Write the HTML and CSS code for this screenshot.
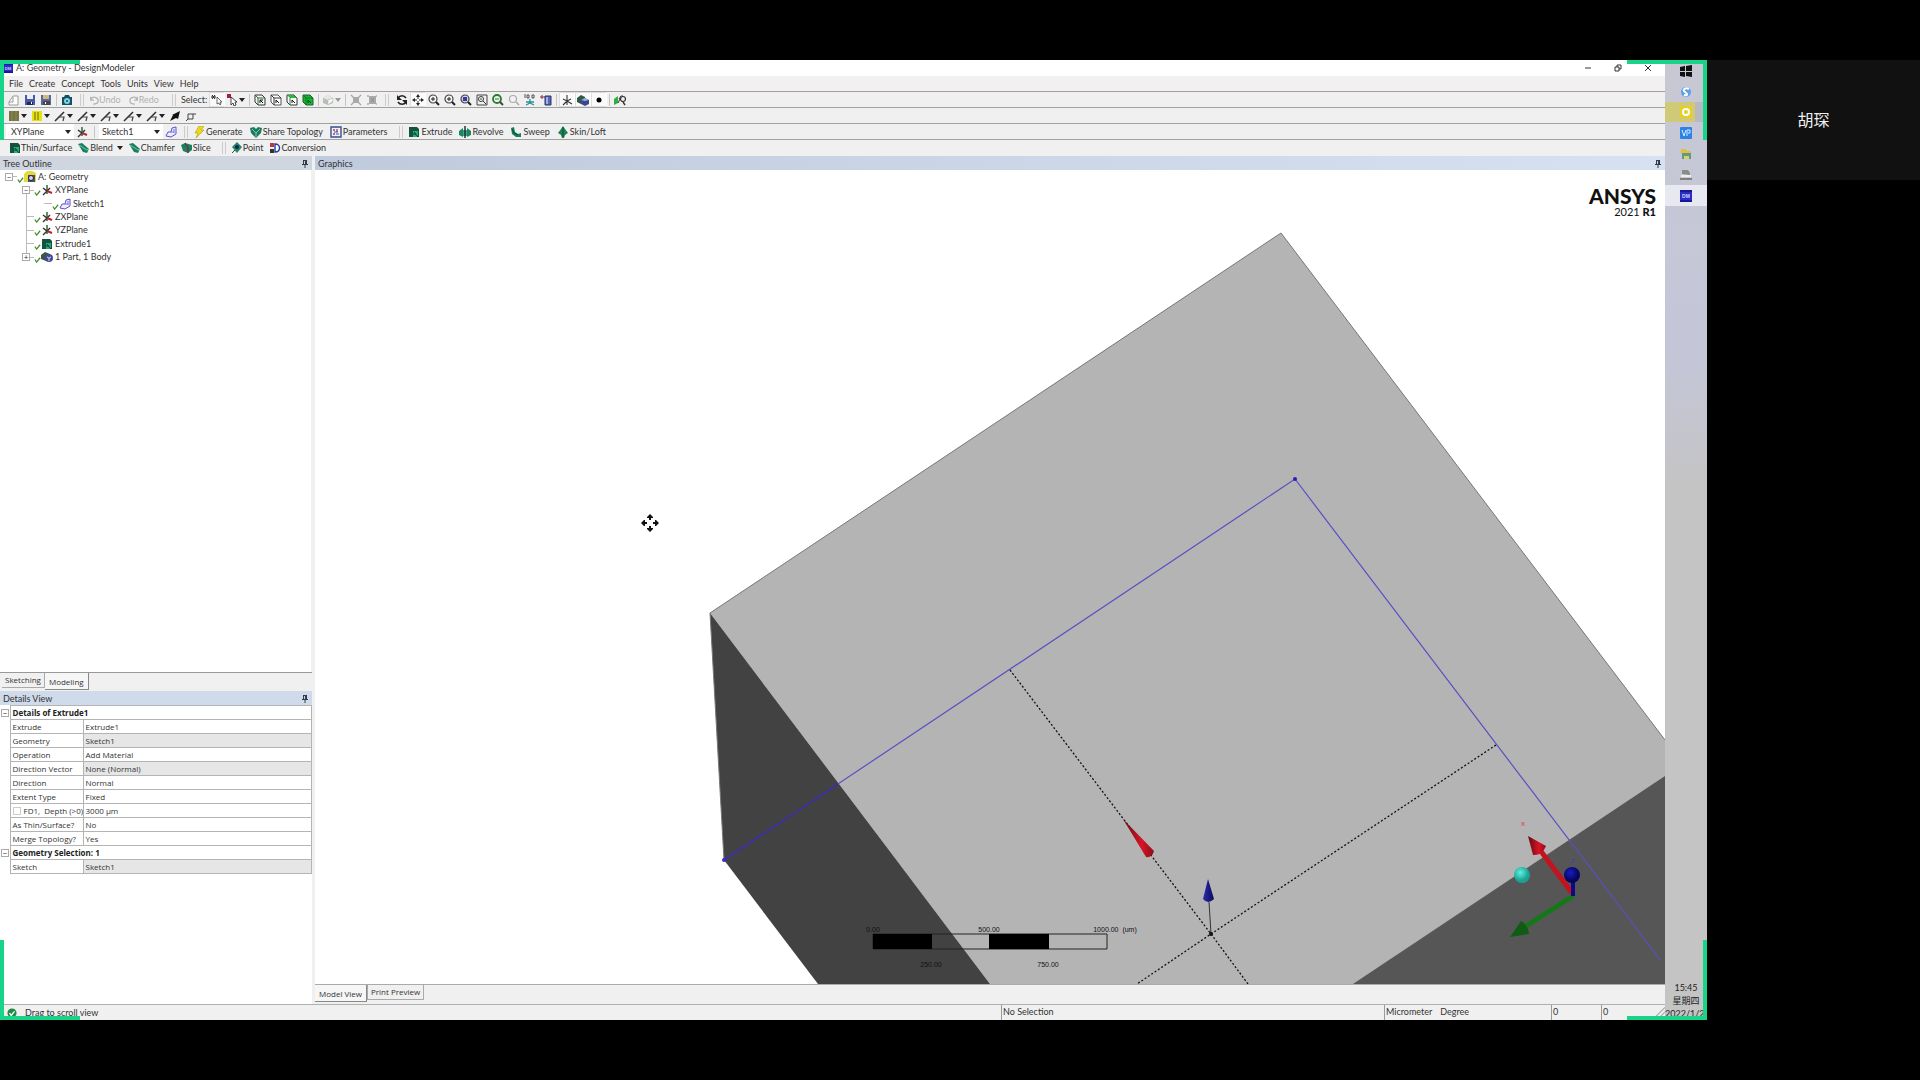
FILE: index.html
```html
<!DOCTYPE html>
<html lang="en">

<head>
    <meta charset="UTF-8">
    <meta name="viewport" content="width=device-width, initial-scale=1.0">
    <title>A: Geometry - DesignModeler</title>
    <link rel="stylesheet" href="styles.css">
</head>

<body>

    <!-- icons -->
    <svg class="defs" aria-hidden="true">
        <symbol id="new" viewBox="0 0 12 12"><path d="M1 11V8l4-6h5v9z" fill="#fff" stroke="#999"/><path d="M1 8h4V3" fill="none" stroke="#999"/></symbol>
        <symbol id="save" viewBox="0 0 12 12"><path d="M1 1h10v10H1z" fill="#4a5aa8"/><path d="M3 1h6v4H3z" fill="#e8ecf8"/><path d="M3 8h6v3H3z" fill="#222a50"/><path d="M7 8h1v2H7z" fill="#fff"/></symbol>
        <symbol id="saveas" viewBox="0 0 12 12"><path d="M1 1h10v10H1z" fill="#59669f"/><path d="M3 1h6v4H3z" fill="#d6b77a"/><path d="M3 7h7v4H3z" fill="#484848"/><path d="M5 8h1v2H5z" fill="#fff"/></symbol>
        <symbol id="camera" viewBox="0 0 12 12"><path d="M1 3h2l1-2h4l1 2h2v8H1z" fill="#17505e"/><circle cx="6" cy="7" r="3" fill="#7cd5e4"/><circle cx="6" cy="7" r="1" fill="#17505e"/></symbol>
        <symbol id="undo" viewBox="0 0 12 12"><path d="M2 2v4h4M2 6c2-5 9-4 9 1 0 3-3 4-6 4" fill="none" stroke="#b4b4b4" stroke-width="1.5"/></symbol>
        <symbol id="redo" viewBox="0 0 12 12"><path d="M10 2v4H6M10 6C8 1 1 2 1 7c0 3 3 4 6 4" fill="none" stroke="#b4b4b4" stroke-width="1.5"/></symbol>
        <symbol id="pick" viewBox="0 0 12 12"><path d="M0 3h5M1 1l3 4M4 1L1 5" stroke="#222" stroke-width="1"/><path d="M6 3v7l2-1 1 2 1-1-1-2h2z" fill="#fff" stroke="#444" stroke-width=".8"/></symbol>
        <symbol id="filter" viewBox="0 0 12 12"><path d="M1 0h4v4H1z" fill="#a32038"/><path d="M5 3v8l2-2 1 3 2-1-1-3h2z" fill="#fff" stroke="#333" stroke-width=".9"/></symbol>
        <symbol id="cube" viewBox="0 0 12 12"><path d="M1 1h7l3 3v7H4L1 8z" fill="#f4f4f4" stroke="#333"/><path d="M1 1l3 3h7M4 4v7" fill="none" stroke="#2f6b3b"/><path d="M6 6l3 3M6 6v3M6 6h3" stroke="#111"/></symbol>
        <symbol id="cubeedge" viewBox="0 0 12 12"><path d="M1 1h7l3 3v7H4L1 8z" fill="#fff" stroke="#555"/><path d="M1 1l3 3h7M4 4v7" fill="none" stroke="#333"/><path d="M6 6l3 3M6 6v3" stroke="#111"/></symbol>
        <symbol id="cubeface" viewBox="0 0 12 12"><path d="M1 1h7l3 3v7H4L1 8z" fill="#fff" stroke="#333"/><path d="M1 1h7l3 3H4z" fill="#27b53e"/><path d="M4 4v7" stroke="#27853e"/><path d="M6 6l3 3M6 6v3" stroke="#111"/></symbol>
        <symbol id="cubebody" viewBox="0 0 12 12"><path d="M1 1h7l3 3v7H4L1 8z" fill="#18b334" stroke="#14672a"/><path d="M1 1l3 3h7M4 4v7" fill="none" stroke="#0c7a20"/><path d="M6 6l3 3M6 6v3" stroke="#053a0d"/></symbol>
        <symbol id="cubegray" viewBox="0 0 12 12"><path d="M1 4l5-3 5 3v5l-5 2-5-2z" fill="#bbb"/><path d="M1 4l5 2 5-2-5-3z" fill="#e6e6e6"/><path d="M6 6l5-2v3l-5 4z" fill="#f4fff4" stroke="#a9bca9" stroke-width=".6"/></symbol>
        <symbol id="expand" viewBox="0 0 12 12"><path d="M1 1l3 3M11 1L8 4M1 11l3-3M11 11L8 8" stroke="#a5a5a5" stroke-width="1.3"/><path d="M3 3h6v6H3z" fill="#a9a9a9"/></symbol>
        <symbol id="shrink" viewBox="0 0 12 12"><path d="M3 2h7v8H3z" fill="#aaa"/><path d="M1 2h2M1 10h2M10 2h1M10 10h1M5 4l3 4M8 4L5 8" stroke="#8c8c8c"/></symbol>
        <symbol id="rotate" viewBox="0 0 12 12"><path d="M10 4C8 1 4 1 2 4M2 8c2 3 6 3 8 0" fill="none" stroke="#222" stroke-width="1.6"/><path d="M1 1v5h5zM11 11V6H6z" fill="#222"/></symbol>
        <symbol id="pan" viewBox="0 0 12 12"><path d="M6 0l2 3H4zM6 12l2-3H4zM0 6l3-2v4zM12 6L9 4v4z" fill="#222"/><path d="M6 3v2M6 7v2M3 6h2M7 6h2" stroke="#333"/></symbol>
        <symbol id="mag" viewBox="0 0 12 12"><circle cx="5" cy="5" r="4" fill="#f4f4f4" stroke="#444" stroke-width="1.2"/><path d="M8 8l3 3" stroke="#222" stroke-width="2"/><path d="M3 5h4M5 3v4" stroke="#222"/></symbol>
        <symbol id="magfill" viewBox="0 0 12 12"><circle cx="5" cy="5" r="4" fill="#cfd0f4" stroke="#444" stroke-width="1.2"/><path d="M3 3h4v4H3z" fill="#3d3a96"/><path d="M8 8l3 3" stroke="#222" stroke-width="2"/></symbol>
        <symbol id="magbox" viewBox="0 0 12 12"><path d="M1 1h10v10H1z" fill="#eee" stroke="#444"/><circle cx="5" cy="5" r="2.5" fill="#fff" stroke="#333"/><path d="M7 7l3 3M4 5h2" stroke="#333"/></symbol>
        <symbol id="maggreen" viewBox="0 0 12 12"><circle cx="5" cy="5" r="4" fill="#e6f5e6" stroke="#287a2e" stroke-width="1.8"/><path d="M8 8l3 3" stroke="#444" stroke-width="2"/><path d="M3 5h4" stroke="#287a2e"/></symbol>
        <symbol id="maggray" viewBox="0 0 12 12"><circle cx="5" cy="5" r="3.5" fill="#f2f2f2" stroke="#aaa" stroke-width="1.2"/><path d="M8 8l3 3" stroke="#aaa" stroke-width="1.6"/></symbol>
        <symbol id="iso" viewBox="0 0 12 12"><path d="M1 0v4M3 1h2v3H3zM8 1h2v3H8z" fill="none" stroke="#444" stroke-width=".9"/><path d="M6 5v4M6 9l-4 2M6 9l4 2M2 8h8" stroke="#26929b" stroke-width="1.3"/></symbol>
        <symbol id="lookat" viewBox="0 0 12 12"><path d="M5 2h6v9H5z" fill="#5666b8" stroke="#2d3567"/><path d="M0 3h5M2 1v4" stroke="#8e2846"/><path d="M6 3h2v7H6z" fill="#a5b0e2"/></symbol>
        <symbol id="axes" viewBox="0 0 12 12"><path d="M6 1v10M6 7l-4 4M6 7l5 3M2 5l4 2 4-2" stroke="#333" stroke-width="1.1" fill="none"/></symbol>
        <symbol id="plane" viewBox="0 0 12 12"><path d="M6 1v9" stroke="#2a6a3a" stroke-width="1.5"/><path d="M6 7l-4 4M2 4l4 3 3-3" stroke="#333" stroke-width="1.4" fill="none"/><path d="M6 7l5 2" stroke="#b82432" stroke-width="2"/></symbol>
        <symbol id="bodies" viewBox="0 0 12 12"><path d="M0 4l4-3 4 2v5l-4 2-4-2z" fill="#2c5a48"/><path d="M4 6l4-2 4 2v4l-4 2-4-2z" fill="#3a468e"/><path d="M4 6l4 1 4-1-4-2z" fill="#a2add8"/></symbol>
        <symbol id="dot" viewBox="0 0 12 12"><circle cx="6" cy="6" r="2.5" fill="#000"/></symbol>
        <symbol id="display" viewBox="0 0 12 12"><path d="M0 5l4-3v7l-4 2z" fill="#2fae45"/><path d="M5 5l2-3h2M4 9l2-4" fill="none" stroke="#333"/><circle cx="9" cy="5" r="2.5" fill="#eee" stroke="#333" stroke-width="1.2"/><path d="M9 8l2 3" stroke="#333" stroke-width="1.4"/></symbol>
        <symbol id="olive" viewBox="0 0 12 12"><path d="M1 1h10v10H1z" fill="#777440"/><path d="M4 1v10M8 1v10" stroke="#8e8b55"/></symbol>
        <symbol id="yellow" viewBox="0 0 12 12"><path d="M1 1h10v10H1z" fill="#e8e20c"/><path d="M4 2v8M7 2v8" stroke="#8d8a10" stroke-width="1.4"/></symbol>
        <symbol id="edge" viewBox="0 0 12 12"><path d="M1 11l9-9" stroke="#333" stroke-width="1.6"/><path d="M5 7l5 0-1 4" fill="none" stroke="#444" stroke-width="1.2"/></symbol>
        <symbol id="pen" viewBox="0 0 12 12"><path d="M1 11l3-6H3l8-4-2 8-2-1z" fill="#111"/></symbol>
        <symbol id="vertex" viewBox="0 0 12 12"><path d="M3 4h5v5H3zM8 4h3M3 9l-2 2" fill="none" stroke="#444"/></symbol>
        <symbol id="sketch" viewBox="0 0 12 12"><path d="M1 10l2-4h3l1-4 4-1v7l-5 3z" fill="#eeedff" stroke="#5a52c8"/><path d="M6 6h3M9 3v4" stroke="#7770d8"/></symbol>
        <symbol id="bolt" viewBox="0 0 12 12"><path d="M6 0h5L8 4h3L3 12l2-5H2z" fill="#ecd91a" stroke="#a79b1c" stroke-width=".6"/></symbol>
        <symbol id="share" viewBox="0 0 12 12"><path d="M0 2l4-1 2 2 2-2 4 1-1 5-5 5-5-5z" fill="#1e7a5e"/><path d="M2 3l4 4 4-4M6 7v4" stroke="#75cdb0" fill="none"/></symbol>
        <symbol id="params" viewBox="0 0 12 12"><path d="M1 1h10v10H1z" fill="#eef0fb" stroke="#3b4c8c" stroke-width="1.4"/><path d="M3 4h2M7 3v3M3 8h2" stroke="#b23a4c" stroke-width="1.4"/><path d="M6 8h3M4 6h4" stroke="#3a55b8"/></symbol>
        <symbol id="extrude" viewBox="0 0 12 12"><path d="M1 1h8l2 2v8H1z" fill="#12543f"/><path d="M5 5h5v6H5z" fill="#2aa77c"/><path d="M6 6l4 5M5 8h3" stroke="#0c3c2c"/></symbol>
        <symbol id="revolve" viewBox="0 0 12 12"><path d="M0 5l4-3v9L0 9zM12 5L8 2v9l4-2z" fill="#1f8560"/><path d="M4 4h4v6H4z" fill="#35ad80"/><path d="M6 0v12" stroke="#223" stroke-width="1.4"/></symbol>
        <symbol id="sweep" viewBox="0 0 12 12"><path d="M1 2l3-1 1 5 3 2 3-1v4H6L2 8z" fill="#178058"/><path d="M2 3l2 4 4 2" stroke="#0b4a34" fill="none"/></symbol>
        <symbol id="skin" viewBox="0 0 12 12"><path d="M6 0l2 3 3 4-3 2-1 3H5L4 9 1 7l3-4z" fill="#1c8055"/><path d="M6 1v10" stroke="#0c5034"/></symbol>
        <symbol id="blend" viewBox="0 0 12 12"><path d="M0 2l4-1 7 6-2 4-4-1z" fill="#1c7f62"/><path d="M1 3l8 5 2-1" stroke="#6cc7a8" fill="none"/></symbol>
        <symbol id="slice" viewBox="0 0 12 12"><path d="M0 3l4-2 7 2v5l-4 3-5-2z" fill="#1c7f62"/><path d="M4 1l3 5v5" stroke="#7c2c36" fill="none" stroke-width="1.2"/></symbol>
        <symbol id="point" viewBox="0 0 12 12"><path d="M6 0l5 5-5 6-5-6z" fill="#21876a"/><circle cx="6" cy="5" r="2" fill="#125"/><path d="M1 11l3-3" stroke="#444"/></symbol>
        <symbol id="convert" viewBox="0 0 12 12"><path d="M1 1h4v4H1z" fill="#b93a3a"/><path d="M1 7h4v4H1z" fill="#333"/><path d="M6 2c6 0 6 8 0 8z" fill="#fff" stroke="#223c9a" stroke-width="1.4"/></symbol>
        <symbol id="project" viewBox="0 0 12 12"><path d="M0 3l3-3h5l4 2v9H0z" fill="#e4d93e"/><path d="M4 4h7v7H4z" fill="#48506f"/><circle cx="7" cy="7" r="2.5" fill="#cfd6f4" stroke="#223"/></symbol>
        <symbol id="part" viewBox="0 0 12 12"><path d="M0 4l4-3 5 2v6l-4 1-5-2z" fill="#3f5540"/><circle cx="8" cy="7" r="4" fill="#44489a"/><path d="M6 6l2 1 2-1M8 7v3" stroke="#dfe3ff"/></symbol>
        <symbol id="check" viewBox="0 0 8 8"><path d="M1 4l2 3 4-5" fill="none" stroke="#3f8f2a" stroke-width="1.4"/></symbol>
        <symbol id="pin" viewBox="0 0 8 8"><path d="M2 0h4v4h1v1H1V4h1z" fill="#333a4a"/><path d="M4 5v3" stroke="#333a4a"/><path d="M3 1h1v3H3z" fill="#c9d3e4"/></symbol>
        <symbol id="app" viewBox="0 0 12 12"><path d="M0 0h12v12H0z" fill="#2b2bc4"/><path d="M0 0h12v2H0zM0 10h12v2H0z" fill="#17179c"/><text x="6" y="8" font-size="5" font-weight="700" font-family="Liberation Sans, sans-serif" text-anchor="middle" fill="#cfd0ff">DM</text></symbol>
        <symbol id="ok" viewBox="0 0 12 12"><circle cx="6" cy="6" r="5.5" fill="#1f8a43"/><path d="M3 6l2 3 4-5" fill="none" stroke="#fff" stroke-width="1.6"/></symbol>
    </svg>

    <div class="meeting">
        <div class="share">

            <div class="app">
                <div class="titlebar">
                    <svg class="icon small"><use href="#app"/></svg>
                    <h1>A: Geometry - DesignModeler</h1>
                    <div class="winbtns">
                        <button aria-label="Minimize"><svg class="win" viewBox="0 0 8 8"><path d="M1 4h6"/></svg></button>
                        <button aria-label="Restore"><svg class="win" viewBox="0 0 8 8"><path d="M1 3h4v4H1zM3 3V1h4v4H5"/></svg></button>
                        <button aria-label="Close"><svg class="win" viewBox="0 0 8 8"><path d="M1 1l6 6M7 1L1 7"/></svg></button>
                    </div>
                </div>

                <div class="menu">
                    <button>File</button>
                    <button>Create</button>
                    <button>Concept</button>
                    <button>Tools</button>
                    <button>Units</button>
                    <button>View</button>
                    <button>Help</button>
                </div>

                <div class="toolbar">
                    <button class="tool" aria-label="New"><svg class="icon"><use href="#new"/></svg></button>
                    <button class="tool" aria-label="Save"><svg class="icon"><use href="#save"/></svg></button>
                    <button class="tool" aria-label="Save as"><svg class="icon"><use href="#saveas"/></svg></button>
                    <span class="sep"></span>
                    <button class="tool" aria-label="Capture"><svg class="icon"><use href="#camera"/></svg></button>
                    <span class="grip"></span>
                    <button class="cmd off" disabled><svg class="icon small"><use href="#undo"/></svg>Undo</button>
                    <button class="cmd off" disabled><svg class="icon small"><use href="#redo"/></svg>Redo</button>
                    <span class="grip"></span>
                    <span class="select-label">Select:</span>
                    <button class="tool on" aria-label="New selection"><svg class="icon"><use href="#pick"/></svg></button>
                    <button class="tool drop" aria-label="Select mode"><svg class="icon"><use href="#filter"/></svg><i class="caret"></i></button>
                    <span class="sep"></span>
                    <button class="tool" aria-label="Points"><svg class="icon"><use href="#cube"/></svg></button>
                    <button class="tool" aria-label="Edges"><svg class="icon"><use href="#cubeedge"/></svg></button>
                    <button class="tool" aria-label="Faces"><svg class="icon"><use href="#cubeface"/></svg></button>
                    <button class="tool" aria-label="Bodies"><svg class="icon"><use href="#cubebody"/></svg></button>
                    <span class="sep"></span>
                    <button class="tool drop off" aria-label="Extend"><svg class="icon"><use href="#cubegray"/></svg><i class="caret"></i></button>
                    <span class="sep"></span>
                    <button class="tool" aria-label="Expand"><svg class="icon"><use href="#expand"/></svg></button>
                    <button class="tool" aria-label="Shrink"><svg class="icon"><use href="#shrink"/></svg></button>
                    <span class="grip"></span>
                    <button class="tool" aria-label="Rotate"><svg class="icon"><use href="#rotate"/></svg></button>
                    <button class="tool on" aria-label="Pan"><svg class="icon"><use href="#pan"/></svg></button>
                    <button class="tool" aria-label="Zoom"><svg class="icon"><use href="#mag"/></svg></button>
                    <button class="tool" aria-label="Box zoom"><svg class="icon"><use href="#mag"/></svg></button>
                    <button class="tool" aria-label="Zoom to fit"><svg class="icon"><use href="#magfill"/></svg></button>
                    <button class="tool" aria-label="Magnifier"><svg class="icon"><use href="#magbox"/></svg></button>
                    <button class="tool" aria-label="Previous view"><svg class="icon"><use href="#maggreen"/></svg></button>
                    <button class="tool" aria-label="Next view"><svg class="icon"><use href="#maggray"/></svg></button>
                    <button class="tool" aria-label="Isometric"><svg class="icon"><use href="#iso"/></svg></button>
                    <button class="tool" aria-label="Look at"><svg class="icon"><use href="#lookat"/></svg></button>
                    <span class="sep"></span>
                    <button class="tool on" aria-label="Display plane"><svg class="icon"><use href="#axes"/></svg></button>
                    <button class="tool on" aria-label="Display model"><svg class="icon"><use href="#bodies"/></svg></button>
                    <button class="tool on" aria-label="Display points"><svg class="icon"><use href="#dot"/></svg></button>
                    <span class="sep"></span>
                    <button class="tool" aria-label="Look at face"><svg class="icon"><use href="#display"/></svg></button>
                </div>

                <div class="toolbar edges">
                    <button class="tool drop" aria-label="Face color"><svg class="icon"><use href="#olive"/></svg><i class="caret"></i></button>
                    <button class="tool drop" aria-label="Edge color"><svg class="icon"><use href="#yellow"/></svg><i class="caret"></i></button>
                    <button class="tool drop" aria-label="Free edges"><svg class="icon"><use href="#edge"/></svg><i class="caret"></i></button>
                    <button class="tool drop" aria-label="Single edges"><svg class="icon"><use href="#edge"/></svg><i class="caret"></i></button>
                    <button class="tool drop" aria-label="Double edges"><svg class="icon"><use href="#edge"/></svg><i class="caret"></i></button>
                    <button class="tool drop" aria-label="Triple edges"><svg class="icon"><use href="#edge"/></svg><i class="caret"></i></button>
                    <button class="tool drop" aria-label="Multiple edges"><svg class="icon"><use href="#edge"/></svg><i class="caret"></i></button>
                    <button class="tool" aria-label="Edge direction"><svg class="icon"><use href="#pen"/></svg></button>
                    <button class="tool" aria-label="Display vertices"><svg class="icon"><use href="#vertex"/></svg></button>
                </div>

                <div class="toolbar features">
                    <span class="combo plane-select">
                        <select aria-label="Plane">
                            <option>XYPlane</option>
                            <option>ZXPlane</option>
                            <option>YZPlane</option>
                        </select>
                        <i class="caret"></i>
                    </span>
                    <button class="tool" aria-label="New plane"><svg class="icon"><use href="#plane"/></svg></button>
                    <span class="sep"></span>
                    <span class="combo sketch-select">
                        <select aria-label="Sketch">
                            <option>Sketch1</option>
                        </select>
                        <i class="caret"></i>
                    </span>
                    <button class="tool" aria-label="New sketch"><svg class="icon"><use href="#sketch"/></svg></button>
                    <span class="grip"></span>
                    <button class="cmd"><svg class="icon"><use href="#bolt"/></svg>Generate</button>
                    <button class="cmd"><svg class="icon"><use href="#share"/></svg>Share Topology</button>
                    <button class="cmd"><svg class="icon"><use href="#params"/></svg>Parameters</button>
                    <span class="grip"></span>
                    <button class="cmd"><svg class="icon"><use href="#extrude"/></svg>Extrude</button>
                    <button class="cmd"><svg class="icon"><use href="#revolve"/></svg>Revolve</button>
                    <button class="cmd"><svg class="icon"><use href="#sweep"/></svg>Sweep</button>
                    <button class="cmd"><svg class="icon"><use href="#skin"/></svg>Skin/Loft</button>
                </div>

                <div class="toolbar last">
                    <button class="cmd"><svg class="icon"><use href="#extrude"/></svg>Thin/Surface</button>
                    <button class="cmd"><svg class="icon"><use href="#blend"/></svg>Blend<i class="caret"></i></button>
                    <button class="cmd"><svg class="icon"><use href="#blend"/></svg>Chamfer</button>
                    <button class="cmd"><svg class="icon"><use href="#slice"/></svg>Slice</button>
                    <span class="grip"></span>
                    <button class="cmd"><svg class="icon"><use href="#point"/></svg>Point</button>
                    <button class="cmd"><svg class="icon"><use href="#convert"/></svg>Conversion</button>
                </div>

                <div class="work">
                    <div class="side">
                        <div class="panel-title"><h2>Tree Outline</h2><svg class="pin"><use href="#pin"/></svg></div>
                        <div class="tree">
                            <ul>
                                <li><button class="box" aria-label="Collapse">−</button><i class="line"></i><svg class="check"><use href="#check"/></svg><svg class="icon"><use href="#project"/></svg>A: Geometry</li>
                                <li class="lv2"><button class="box" aria-label="Collapse">−</button><i class="line"></i><svg class="check"><use href="#check"/></svg><svg class="icon"><use href="#plane"/></svg>XYPlane</li>
                                <li class="lv3"><i class="line"></i><svg class="check"><use href="#check"/></svg><svg class="icon"><use href="#sketch"/></svg>Sketch1</li>
                                <li class="lv2 leaf"><i class="line"></i><svg class="check"><use href="#check"/></svg><svg class="icon"><use href="#plane"/></svg>ZXPlane</li>
                                <li class="lv2 leaf"><i class="line"></i><svg class="check"><use href="#check"/></svg><svg class="icon"><use href="#plane"/></svg>YZPlane</li>
                                <li class="lv2 leaf"><i class="line"></i><svg class="check"><use href="#check"/></svg><svg class="icon"><use href="#extrude"/></svg>Extrude1</li>
                                <li class="lv2"><button class="box" aria-label="Expand">+</button><i class="line"></i><svg class="check"><use href="#check"/></svg><svg class="icon"><use href="#part"/></svg>1 Part, 1 Body</li>
                            </ul>
                        </div>
                        <div class="tabs side-tabs">
                            <button class="tab">Sketching</button>
                            <button class="tab tab-active">Modeling</button>
                        </div>

                        <div class="panel-title"><h2>Details View</h2><svg class="pin"><use href="#pin"/></svg></div>
                        <div class="details">
                            <table>
                                <colgroup><col class="gut-col"><col class="name-col"><col></colgroup>
                                <tr><td class="gut"><button class="box" aria-label="Collapse">−</button></td><th colspan="2">Details of Extrude1</th></tr>
                                <tr><td class="gut"></td><td>Extrude</td><td>Extrude1</td></tr>
                                <tr><td class="gut"></td><td>Geometry</td><td class="lock">Sketch1</td></tr>
                                <tr><td class="gut"></td><td>Operation</td><td>Add Material</td></tr>
                                <tr><td class="gut"></td><td>Direction Vector</td><td class="lock">None (Normal)</td></tr>
                                <tr><td class="gut"></td><td>Direction</td><td>Normal</td></tr>
                                <tr><td class="gut"></td><td>Extent Type</td><td>Fixed</td></tr>
                                <tr><td class="gut"></td><td><label><input type="checkbox">FD1,&nbsp; Depth (&gt;0)</label></td><td>3000 µm</td></tr>
                                <tr><td class="gut"></td><td>As Thin/Surface?</td><td>No</td></tr>
                                <tr><td class="gut"></td><td>Merge Topology?</td><td>Yes</td></tr>
                                <tr><td class="gut"><button class="box" aria-label="Collapse">−</button></td><th colspan="2">Geometry Selection: 1</th></tr>
                                <tr><td class="gut"></td><td>Sketch</td><td class="lock">Sketch1</td></tr>
                            </table>
                        </div>
                    </div>

                    <div class="graphics">
                        <div class="panel-title"><h2>Graphics</h2><svg class="pin"><use href="#pin"/></svg></div>
                        <div class="canvas">
                            <svg class="scene" viewBox="315 170 1350 814" preserveAspectRatio="xMinYMin slice">
                                <defs>
                                    <linearGradient id="redCone"><stop offset="0" stop-color="#5e0d14"/><stop offset=".6" stop-color="#d81426"/><stop offset="1" stop-color="#8a0f1c"/></linearGradient>
                                    <linearGradient id="blueCone"><stop offset="0" stop-color="#2a2ab0"/><stop offset="1" stop-color="#0a0a58"/></linearGradient>
                                    <radialGradient id="cyanBall" cx=".4" cy=".35"><stop offset="0" stop-color="#5ff0e0"/><stop offset="1" stop-color="#1aa294"/></radialGradient>
                                    <radialGradient id="blueBall" cx=".4" cy=".35"><stop offset="0" stop-color="#1a1ac8"/><stop offset="1" stop-color="#06065c"/></radialGradient>
                                </defs>

                                <!-- body faces -->
                                <path d="M710 613L1281 233L1665 740V984H990z" fill="#b4b4b4"/>
                                <path d="M710 613L724 860L818 984H990z" fill="#424242"/>
                                <path d="M1353 984L1665 776V984z" fill="#565656"/>
                                <path d="M724 860L710 613L1281 233L1665 740" fill="none" stroke="#777" stroke-width="1"/>

                                <!-- sketch -->
                                <path d="M724 860L1295 479L1661 961" fill="none" stroke="#5850c4" stroke-width="1.2"/>
                                <path d="M724 860L838 784" stroke="#3a2fa0" stroke-width="1.6"/>
                                <circle cx="724" cy="860" r="2" fill="#3a2fc0"/>
                                <circle cx="1295" cy="479" r="2" fill="#2a20b0"/>
                                <path d="M1010 670L1211 934L1248 984M1496 745L1211 934L1137 984" fill="none" stroke="#111" stroke-width="1.3" stroke-dasharray="2 2"/>

                                <!-- local axes -->
                                <path d="M1123 819L1146 857Q1152 858 1154 851z" fill="url(#redCone)"/>
                                <path d="M1209 902L1211 934" stroke="#333"/>
                                <path d="M1208 879L1203 899Q1208 905 1214 899z" fill="url(#blueCone)"/>
                                <circle cx="1211" cy="934" r="2" fill="#111"/>

                                <!-- scale -->
                                <path d="M873 934h234v15H873z" fill="none" stroke="#222"/>
                                <path d="M873 934h59v15h-59zM989 934h60v15h-60z" fill="#000"/>
                                <g class="scale-text">
                                    <text x="873" y="932">0.00</text>
                                    <text x="989" y="932">500.00</text>
                                    <text x="1115" y="932">1000.00 &#160;(um)</text>
                                    <text x="931" y="967">250.00</text>
                                    <text x="1048" y="967">750.00</text>
                                </g>

                                <!-- triad -->
                                <path d="M1540 850L1572 893" stroke="#c4131f" stroke-width="5"/>
                                <path d="M1528 836L1533 855Q1542 856 1546 846z" fill="url(#redCone)"/>
                                <path d="M1573 896L1526 926" stroke="#147818" stroke-width="5"/>
                                <path d="M1510 937L1521 921Q1528 925 1529 934z" fill="#0f5c14"/>
                                <path d="M1573 878V896" stroke="#0a0a86" stroke-width="4"/>
                                <circle cx="1572" cy="875" r="8" fill="url(#blueBall)"/>
                                <circle cx="1522" cy="875" r="8" fill="url(#cyanBall)"/>
                                <text x="1521" y="826" class="axis-x">x</text>
                                <text x="1571" y="863" class="axis-z">z</text>

                                <!-- move cursor -->
                                <g transform="translate(650 523)">
                                    <path d="M0-9l3 3v1H1v2h-2v-2h-2v-1zM0 9l3-3v-1H1V3h-2v2h-2v1zM-9 0l3-3h1v2h2v2h-2v2h-1zM9 0L6-3H5v2H3v2h2v2h1z" fill="#111"/>
                                </g>
                            </svg>
                            <div class="logo">
                                <div class="brand">ANSYS</div>
                                <div class="version">2021 <b>R1</b></div>
                            </div>
                        </div>
                        <div class="tabs view-tabs">
                            <button class="tab tab-active">Model View</button>
                            <button class="tab">Print Preview</button>
                        </div>
                    </div>
                </div>

                <div class="status">
                    <div class="hint"><svg class="icon small"><use href="#ok"/></svg>Drag to scroll view</div>
                    <div class="selection">No Selection</div>
                    <div class="units"><span>Micrometer</span><span>Degree</span></div>
                    <div class="num">0</div>
                    <div class="num">0</div>
                    <svg class="resize" viewBox="0 0 12 12"><path d="M2 12L12 2M6 12l6-6M10 12l2-2" stroke="#aaa"/></svg>
                </div>
            </div>

            <div class="taskbar">
                <button class="task" aria-label="Start"><svg class="icon" viewBox="0 0 12 12"><path d="M0 2l5-1v5H0zM6 1l6-1v6H6zM0 7h5v5l-5-1zM6 7h6v5l-6-1z" fill="#111"/></svg></button>
                <button class="task" aria-label="Browser"><svg class="icon" viewBox="0 0 12 12"><circle cx="6" cy="6" r="5" fill="#5da0e6"/><path d="M9 3C5 1 2 4 5 6s3 4-1 3" fill="none" stroke="#fff" stroke-width="2"/></svg></button>
                <button class="task notice" aria-label="Player"><svg class="icon" viewBox="0 0 12 12"><path d="M0 0h12v12H0z" fill="#e5cf28"/><circle cx="6" cy="6" r="3" fill="none" stroke="#fff" stroke-width="2"/></svg></button>
                <button class="task" aria-label="Viewer"><svg class="icon" viewBox="0 0 12 12"><rect width="12" height="12" rx="1" fill="#2d82e6"/><path d="M2 3l2 6 2-6M7 9V3h3v3H8" fill="none" stroke="#d5eaff"/></svg></button>
                <button class="task" aria-label="Files"><svg class="icon" viewBox="0 0 12 12"><path d="M1 1h5l1 2h4v3H1z" fill="#e2bf3e"/><path d="M2 5h9v6H2z" fill="#5e9a88"/><path d="M4 8h5v3H4z" fill="#d8cf70"/></svg></button>
                <button class="task" aria-label="Workbench"><svg class="icon" viewBox="0 0 12 12"><path d="M2 5V1h6l2 3v2z" fill="#8b8b8b"/><path d="M1 6h10v2H1z" fill="#eee"/><path d="M0 9h12v2H0z" fill="#808080"/></svg></button>
                <button class="task current" aria-label="DesignModeler"><svg class="icon"><use href="#app"/></svg></button>
                <div class="clock">
                    <div>15:45</div>
                    <div>星期四</div>
                    <div>2022/1/20</div>
                </div>
            </div>

            <span class="corner tl"></span>
            <span class="corner tr"></span>
            <span class="corner bl"></span>
            <span class="corner br"></span>
        </div>

        <div class="people">
            <div class="person">胡琛</div>
        </div>
    </div>

</body>

</html>
```
FILE: styles.css
```css
* {
    margin: 0;
    padding: 0;
    box-sizing: border-box;
}

body {
    background-color: #000;
    color: #333;
    font-family: Lato, "Noto Sans CJK SC", sans-serif;
    font-size: 9px;
    line-height: 12px;
}

button,
select,
input {
    font: inherit;
    color: inherit;
    background: none;
    border: 0;
    border-radius: 0;
    appearance: none;
}

h1,
h2 {
    font-size: inherit;
    font-weight: normal;
}

.defs {
    display: none;
}

.meeting {
    display: grid;
    grid-template-columns: 1fr 213px;
    height: 100vh;
    padding: 60px 0;
}

.share {
    display: grid;
    grid-template-columns: 1fr 42px;
    min-height: 0;
    position: relative;
    overflow: hidden;
}

.app {
    display: flex;
    flex-direction: column;
    min-width: 0;
    min-height: 0;
    background-color: #f0f0f0;
}

.icon {
    width: 12px;
    height: 12px;
    flex: none;
}

.icon.small {
    width: 10px;
    height: 10px;
}

/* title + menu */
.titlebar {
    display: flex;
    align-items: center;
    gap: 3px;
    height: 16px;
    padding-left: 3px;
    background-color: #fff;
}

.winbtns {
    display: flex;
    margin-left: auto;
    margin-right: 2px;
}

.winbtns button {
    width: 30px;
    height: 12px;
    display: flex;
    justify-content: center;
    align-items: center;
}

.win {
    width: 8px;
    height: 8px;
    fill: none;
    stroke: #333;
}

.menu {
    display: flex;
    gap: 6px;
    height: 15px;
    padding-top: 1px;
    padding-left: 9px;
    align-items: center;
    background-color: #f2f0f1;
}

/* toolbars */
.toolbar {
    display: flex;
    align-items: center;
    height: 16px;
    padding-left: 6px;
    border-top: 1px solid #a0a0a0;
}

.toolbar.last {
    height: 17px;
    padding-left: 9px;
}

.tool {
    width: 16px;
    height: 15px;
    display: flex;
    align-items: center;
    justify-content: center;
    flex: none;
}

.tool.on {
    background-color: #fafafa;
    border: 1px solid #ddd;
    border-right-color: #fff;
}

.drop {
    width: 22px;
    gap: 1px;
}

.edges .drop {
    width: 23px;
}

.caret {
    border: 3px solid transparent;
    border-top: 4px solid #222;
    border-bottom: 0;
}

.off {
    color: #b0b0b0;
}

.off .caret {
    border-top-color: #999;
}

.cmd {
    display: flex;
    align-items: center;
    height: 15px;
    margin-right: 8px;
    flex: none;
}

.features .cmd {
    gap: 1px;
    margin-right: 7px;
}

.last .cmd {
    margin-right: 6px;
}

.cmd .caret {
    margin-left: 4px;
}

.sep {
    width: 1px;
    height: 12px;
    margin: 0 2px;
    background-color: #c4c4c4;
}

.features .sep {
    margin: 0 4px;
}

.grip {
    width: 4px;
    height: 12px;
    margin: 0 5px;
    border-left: 1px solid #ccc;
    border-right: 1px solid #ccc;
}

.select-label {
    width: 28px;
}

.combo {
    display: flex;
    align-items: center;
    height: 15px;
    padding: 0 3px 0 5px;
    background-color: #fff;
}

.combo select {
    flex: 1;
    min-width: 0;
    height: 15px;
}

.combo .caret {
    pointer-events: none;
}

.plane-select {
    width: 68px;
}

.sketch-select {
    width: 64px;
    padding-left: 3px;
}

/* work area */
.work {
    flex: 1;
    min-height: 0;
    display: grid;
    grid-template-columns: 312px 1fr;
    gap: 3px;
}

.side,
.graphics {
    display: flex;
    flex-direction: column;
    min-width: 0;
    min-height: 0;
}

.panel-title {
    display: flex;
    justify-content: space-between;
    align-items: center;
    height: 14px;
    padding: 2px 3px 0;
    flex: none;
    background-color: #cfdaea;
}

.side .panel-title:first-child {
    background-color: #d0d6e0;
}

.graphics .panel-title {
    background: linear-gradient(90deg, #bfcadc, #d6e2f2);
}

.pin {
    width: 8px;
    height: 8px;
}

.tree {
    flex: 1;
    background-color: #fff;
    border-right: 1px solid #f0f0f0;
}

.tree ul {
    list-style: none;
    display: grid;
    grid-auto-rows: 1fr;
    height: 94px;
    background: linear-gradient(#bbb, #bbb) 26px 24px / 1px 60px no-repeat;
}

.tree li {
    display: flex;
    align-items: center;
    padding-left: 5px;
}

.tree li.lv2 {
    padding-left: 22px;
}

.tree li.lv2.leaf {
    padding-left: 26px;
}

.tree li.lv3 {
    padding-left: 44px;
}

.tree .icon {
    margin-right: 2px;
}

.line {
    width: 4px;
    border-top: 1px solid #bbb;
}

.leaf .line,
.lv3 .line {
    width: 8px;
}

.check {
    width: 7px;
    height: 7px;
    margin-top: 5px;
}

.box {
    width: 8px;
    height: 8px;
    border: 1px solid #aaa;
    background-color: #fff;
    font-size: 8px;
    line-height: 6px;
    display: flex;
    justify-content: center;
    align-items: center;
}

/* the smaller text of the tabs and the property grid */
.tabs,
.details {
    font-family: "Open Sans", sans-serif;
    font-size: 8px;
}

.tabs {
    display: flex;
    align-items: flex-start;
    flex: none;
}

.side-tabs {
    height: 19px;
    padding-left: 2px;
    border-top: 1px solid #999;
}

.view-tabs {
    height: 20px;
    border-top: 1px solid #aaa;
}

.tab {
    height: 15px;
    padding: 0 3px;
    border: 1px solid #aaa;
    border-top: 0;
    background-color: #f0f0f0;
}

.side-tabs .tab:first-child {
    border-left: 0;
}

.tab-active {
    height: 17px;
    padding: 1px 4px 0;
    border-left: 0;
    border-color: #888;
    background-color: #f6f6f6;
}

.details {
    height: 299px;
    background-color: #fff;
}

table {
    width: 100%;
    table-layout: fixed;
    border-collapse: collapse;
}

.gut-col {
    width: 10px;
}

.name-col {
    width: 73px;
}

td,
th {
    height: 14px;
    padding: 0 2px;
    border: 1px solid #b4b4b4;
    text-align: left;
    line-height: 12px;
    white-space: nowrap;
}

th {
    color: #222;
}

.gut {
    padding: 0 0 0 1px;
    border: 0;
}

.lock {
    background-color: #e6e6e6;
}

td label {
    display: flex;
    align-items: center;
    gap: 3px;
}

input[type="checkbox"] {
    width: 8px;
    height: 8px;
    flex: none;
    border: 1px solid #ccc;
    background-color: #fff;
}

/* graphics */
.canvas {
    flex: 1;
    min-height: 0;
    position: relative;
    background-color: #fff;
}

.scene {
    display: block;
    width: 100%;
    height: 100%;
}

.scale-text {
    font-family: "Liberation Sans", sans-serif;
    font-size: 7px;
    text-anchor: middle;
    fill: #111;
}

.axis-x {
    font-size: 8px;
    fill: #e0405a;
}

.axis-z {
    font-size: 8px;
    fill: #4038c0;
}

.logo {
    position: absolute;
    top: 16px;
    right: 9px;
    color: #111;
    text-align: right;
}

.brand {
    font-size: 21px;
    line-height: 20px;
    font-weight: 900;
}

.version {
    font-size: 11px;
    line-height: 12px;
}

.version b {
    font-weight: 900;
}

/* status bar */
.status {
    display: flex;
    height: 16px;
    flex: none;
    border-top: 1px solid #b0b0b0;
    line-height: 14px;
}

.hint {
    flex: 1;
    display: flex;
    align-items: center;
    gap: 8px;
    padding-left: 7px;
}

.selection {
    width: 383px;
}

.units {
    width: 167px;
    display: flex;
    gap: 8px;
}

.num {
    width: 50px;
}

.selection,
.units,
.num {
    padding-left: 1px;
    border-left: 1px solid #999;
}

.resize {
    width: 14px;
    height: 14px;
    fill: none;
}

/* taskbar */
.taskbar {
    display: flex;
    flex-direction: column;
    min-height: 0;
    overflow: hidden;
    background: linear-gradient(#c8c8d4, #c4c6d8 30%, #c4c4c4 45%);
}

.task {
    display: flex;
    align-items: center;
    justify-content: center;
    height: 21px;
    flex: none;
}

.notice {
    height: 20px;
    background: linear-gradient(90deg, #d0c977 30px, #b8b8c0 30px);
}

.current {
    background-color: #e8e8f0;
}

.clock {
    margin-top: auto;
    text-align: center;
    line-height: 13px;
    white-space: nowrap;
    color: #222;
}

.corner {
    position: absolute;
    width: 80px;
    height: 80px;
    border: 0 solid #18d488;
    pointer-events: none;
}

.tl {
    top: 0;
    left: 0;
    border-width: 4px 0 0 4px;
}

.tr {
    top: 0;
    right: 0;
    border-width: 4px 4px 0 0;
}

.bl {
    bottom: 0;
    left: 0;
    border-width: 0 0 4px 4px;
}

.br {
    bottom: 0;
    right: 0;
    border-width: 0 4px 4px 0;
}

/* participants */
.person {
    height: 120px;
    padding-bottom: 1px;
    display: flex;
    align-items: center;
    justify-content: center;
    background-color: #111112;
    color: #f0f0f0;
    font-size: 16px;
}
```
